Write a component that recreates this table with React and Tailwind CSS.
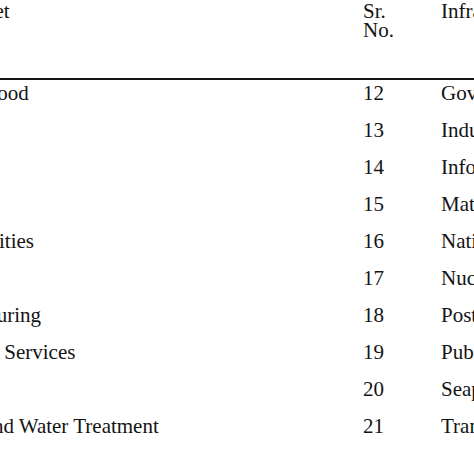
const rows = [
  { no: 12, asset: 'Agriculture and Food', infra: 'Government Facilities' },
  { no: 13, asset: 'Banking', infra: 'Industrial Facilities' },
  { no: 14, asset: 'Chemical', infra: 'Information Technology' },
  { no: 15, asset: 'Commerce', infra: 'Materials' },
  { no: 16, asset: 'Commercial Facilities', infra: 'National Monuments' },
  { no: 17, asset: 'Dams', infra: 'Nuclear Reactors' },
  { no: 18, asset: 'Critical Manufacturing', infra: 'Postal and Shipping' },
  { no: 19, asset: 'Defense Logistics Services', infra: 'Public Health' },
  { no: 20, asset: 'Energy', infra: 'Seaports' },
  { no: 21, asset: 'Drinking Water and Water Treatment', infra: 'Transportation' },
];

export default function App() {
  return (
    <div className="w-[474px] h-[474px] overflow-hidden bg-white text-[#141414] font-['Liberation_Serif',serif] text-[21px]">
      <div className="ml-[-152px] w-[800px]">
        <div className="flex h-[80px] border-b-2 border-[#141414] pt-[2px] leading-[19px]">
          <div className="w-[515px] shrink-0 whitespace-nowrap">Nature of the Asset</div>
          <div className="w-[78px] shrink-0">
            Sr.
            <br />
            No.
          </div>
          <div className="whitespace-nowrap">Infrastructure</div>
        </div>
        <div className="pt-[1px]">
          {rows.map((r) => (
            <div key={r.no} className="flex h-[37px] leading-[24px]">
              <div className="w-[515px] shrink-0 whitespace-nowrap">{r.asset}</div>
              <div className="w-[78px] shrink-0">{r.no}</div>
              <div className="whitespace-nowrap">{r.infra}</div>
            </div>
          ))}
        </div>
      </div>
    </div>
  );
}
